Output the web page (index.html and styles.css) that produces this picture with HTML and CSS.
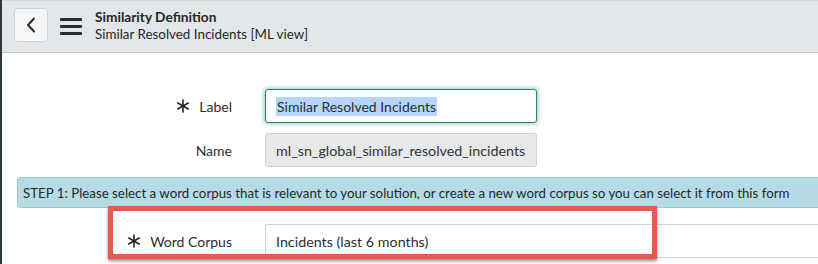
FILE: index.html
```html
<!DOCTYPE html>
<html>
<head>
<meta charset="utf-8">
<link rel="stylesheet" href="styles.css">
</head>
<body>
<div class="page">
  <header class="header">
    <button class="back" aria-label="Back">
      <svg width="10" height="16" viewBox="0 0 10 16"><path d="M8 1.5 L2 8 L8 14.5" fill="none" stroke="#2b2b2b" stroke-width="2" stroke-linecap="round" stroke-linejoin="round"/></svg>
    </button>
    <div class="burger"><span></span><span></span><span></span></div>
    <div class="titles">
      <div class="title">Similarity Definition</div>
      <div class="subtitle">Similar Resolved Incidents [ML view]</div>
    </div>
  </header>
  <main class="form">
    <div class="row">
      <div class="lbl"><svg class="req" width="14" height="14" viewBox="0 0 14 14"><g stroke="#222" stroke-width="1.6" stroke-linecap="round"><line x1="7" y1="1" x2="7" y2="13"/><line x1="1.8" y1="4" x2="12.2" y2="10"/><line x1="1.8" y1="10" x2="12.2" y2="4"/></g></svg><span>Label</span></div>
      <div class="input focus"><span class="sel">Similar Resolved Incidents</span></div>
    </div>
    <div class="row">
      <div class="lbl"><span>Name</span></div>
      <div class="input ro">ml_sn_global_similar_resolved_incidents</div>
    </div>
    <div class="banner">STEP 1: Please select a word corpus that is relevant to your solution, or create a new word corpus so you can select it from this form</div>
    <div class="row corpus">
      <div class="lbl"><svg class="req" width="14" height="14" viewBox="0 0 14 14"><g stroke="#222" stroke-width="1.6" stroke-linecap="round"><line x1="7" y1="1" x2="7" y2="13"/><line x1="1.8" y1="4" x2="12.2" y2="10"/><line x1="1.8" y1="10" x2="12.2" y2="4"/></g></svg><span>Word Corpus</span></div>
      <div class="input wide">Incidents (last 6 months)</div>
    </div>
    <div class="highlight-box"></div>
  </main>
</div>
</body>
</html>
```

FILE: styles.css
```css
html, body {
  margin: 0;
  padding: 0;
  background: #ffffff;
}
body {
  font-family: "Lato", "Source Sans Pro", "Liberation Sans", sans-serif;
  color: #2e2e2e;
  overflow: hidden;
}
.page {
  position: relative;
  width: 818px;
  height: 264px;
  border-left: 2px solid #2d3b3d;
  box-sizing: border-box;
  overflow: hidden;
}
.header {
  height: 53px;
  box-sizing: border-box;
  background: #e4e7ea;
  border-top: 1px solid #d3d7db;
  border-bottom: 1px solid #c6c9cc;
  display: flex;
  align-items: flex-start;
  padding: 7px 0 0 12px;
}
.back {
  flex-shrink: 0;
  width: 34px;
  height: 34px;
  box-sizing: border-box;
  background: #f5f6f7;
  border: 1px solid #d0d3d6;
  border-radius: 4px;
  padding: 0;
  display: flex;
  align-items: center;
  justify-content: center;
}
.burger {
  margin: 10px 0 0 12px;
  width: 22px;
  display: flex;
  flex-direction: column;
  gap: 4px;
}
.burger span {
  display: block;
  height: 3px;
  background: #2b2b2b;
  border-radius: 1px;
}
.titles {
  margin: 1px 0 0 13px;
  line-height: 16.5px;
  color: #262626;
}
.title {
  font-weight: 700;
  font-size: 13.7px;
}
.subtitle {
  font-size: 13.4px;
}
.form {
  padding: 36px 0 0 0;
}
.row {
  display: flex;
  align-items: center;
  margin-bottom: 10px;
}
.lbl {
  flex-shrink: 0;
  width: 230px;
  display: flex;
  align-items: center;
  justify-content: flex-end;
  gap: 9px;
  font-size: 14px;
  color: #2e2e2e;
  margin-right: 33px;
}
.req {
  display: block;
}
.input {
  flex-shrink: 0;
  width: 272px;
  height: 34px;
  box-sizing: border-box;
  border: 1px solid #cfd2d5;
  border-radius: 3px;
  padding: 0 10px;
  display: flex;
  align-items: center;
  font-size: 14.3px;
  color: #2e2e2e;
  background: #fff;
}
.input.focus {
  border-color: #2f7f76;
  box-shadow: 0 0 4px 1px rgba(47, 127, 118, 0.45);
  font-size: 14px;
}
.sel {
  background: #b5d5fd;
  line-height: 19px;
  padding: 0 1px;
}
.input.ro {
  background: #e6e8ea;
  color: #333;
}
.banner {
  margin: 0 -4px 0 15px;
  height: 31px;
  box-sizing: border-box;
  background: #b6dbe4;
  border: 1px solid #9cc6d1;
  border-radius: 3px;
  padding: 0 0 0 5px;
  display: flex;
  align-items: center;
  font-size: 13.3px;
  color: #1d2a2d;
  white-space: nowrap;
}
.row.corpus {
  margin-top: 16px;
}
.input.wide {
  width: 600px;
  border-right: none;
  border-radius: 3px 0 0 3px;
}
.highlight-box {
  position: absolute;
  left: 106px;
  top: 206px;
  width: 549px;
  height: 53px;
  box-sizing: border-box;
  border: 5px solid #e85a50;
  box-shadow: 0 2px 3px rgba(0, 0, 0, 0.45);
  pointer-events: none;
}
```
